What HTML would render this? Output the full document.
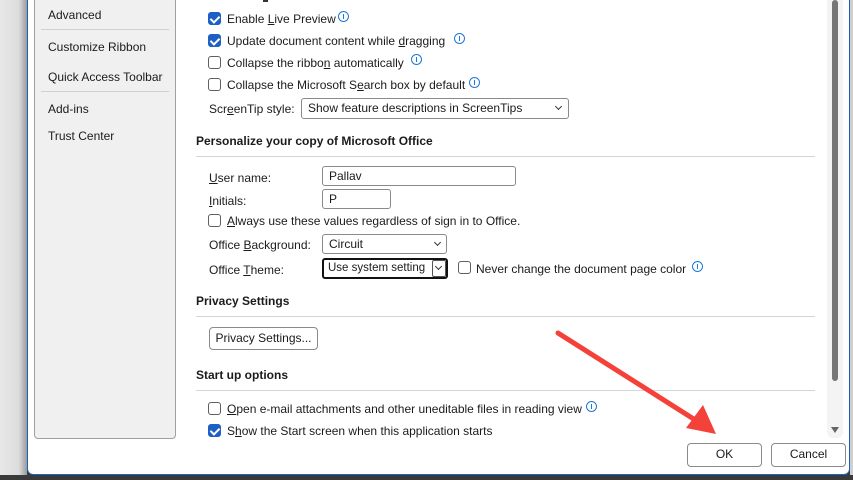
<!DOCTYPE html>
<html><head><style>
*{margin:0;padding:0;box-sizing:border-box}
body{width:853px;height:480px;overflow:hidden;position:relative;background:#3a3a3a;font-family:"Liberation Sans",sans-serif;font-size:12px;color:#1b1b1b}
.abs{position:absolute}
.t{position:absolute;white-space:nowrap;line-height:14px}
.cb{position:absolute;width:13px;height:13px;border:1px solid #5f5f5f;border-radius:3px;background:#fff}
.cb.on{background:#1d5fc4;border-color:#1d5fc4}
.cb.on:after{content:"";position:absolute;left:3px;top:1px;width:4px;height:7px;border:solid #fff;border-width:0 2px 2px 0;transform:rotate(45deg)}
.info{position:absolute;width:11px;height:11px;border:1.3px solid #1e78d8;border-radius:50%}
.info:after{content:"";position:absolute;left:3.5px;top:2px;width:1.5px;height:5px;background:#1e78d8}
.box{position:absolute;border:1px solid #8a8a8a;border-radius:3px;background:#fff;padding-left:6px;line-height:18px}
.chev{position:absolute;width:5px;height:5px;border:solid #333;border-width:0 1.3px 1.3px 0;transform:rotate(45deg)}
.h{position:absolute;font-weight:bold;white-space:nowrap}
.line{position:absolute;height:1px;background:#d5d5d5}
.btn{position:absolute;border:1px solid #8a8a8a;border-radius:4px;background:#fff;text-align:center;line-height:21px}
u{text-decoration:underline}
</style></head><body>
<div class="abs" style="left:0;top:0;width:27px;height:475px;background:linear-gradient(to right,#e8e8e8,#dcdcdc 70%,#9a9a9a)"></div>
<div class="abs" style="left:27px;top:-5px;width:823px;height:480px;background:#fff;border:1px solid #1f5fbf;border-radius:6px"></div>
<div class="abs" style="left:850px;top:0;width:3px;height:475px;background:#cfcfcf"></div>
<div class="abs" style="left:0;top:475px;width:853px;height:5px;background:#3a3a3a"></div>
<div class="abs" style="left:263px;top:0;width:5px;height:2px;background:#333"></div>
<!-- nav -->
<div class="abs" style="left:34px;top:-5px;width:142px;height:444px;background:#f0f0f0;border:1px solid #a0a0a0;border-radius:4px"></div>
<div class="t" style="left:48px;top:8px">Advanced</div>
<div class="line" style="left:41px;top:29px;width:128px;background:#d0d0d0"></div>
<div class="t" style="left:48px;top:40px">Customize Ribbon</div>
<div class="t" style="left:48px;top:70px">Quick Access Toolbar</div>
<div class="line" style="left:41px;top:91px;width:128px;background:#d0d0d0"></div>
<div class="t" style="left:48px;top:102px">Add-ins</div>
<div class="t" style="left:48px;top:129px">Trust Center</div>
<!-- scrollbar -->
<div class="abs" style="left:827px;top:0;width:16px;height:438px;background:#f4f4f4;border-radius:0 0 6px 6px"></div>
<div class="abs" style="left:832px;top:0;width:6px;height:381px;background:#777;border-radius:3px"></div>
<div class="abs" style="left:831px;top:427px;width:0;height:0;border-left:4px solid transparent;border-right:4px solid transparent;border-top:6px solid #666"></div>
<!-- options -->
<div class="cb on" style="left:208px;top:12px"></div><div class="t" style="left:227px;top:12px">Enable <u>L</u>ive Preview</div><div class="info" style="left:338px;top:11px"></div>
<div class="cb on" style="left:208px;top:34px"></div><div class="t" style="left:227px;top:34px">Update document content while <u>d</u>ragging</div><div class="info" style="left:454px;top:33px"></div>
<div class="cb" style="left:208px;top:56px"></div><div class="t" style="left:227px;top:56px">Collapse the ribbo<u>n</u> automatically</div><div class="info" style="left:411px;top:54px"></div>
<div class="cb" style="left:208px;top:78px"></div><div class="t" style="left:227px;top:78px">Collapse the Microsoft S<u>e</u>arch box by default</div><div class="info" style="left:469px;top:77px"></div>
<div class="t" style="left:209px;top:102px">Scr<u>e</u>enTip style:</div>
<div class="box" style="left:301px;top:98px;width:268px;height:21px">Show feature descriptions in ScreenTips</div><div class="chev" style="left:556px;top:104px"></div>
<div class="h" style="left:196px;top:134px">Personalize your copy of Microsoft Office</div>
<div class="line" style="left:196px;top:156px;width:619px"></div>
<div class="t" style="left:209px;top:171px"><u>U</u>ser name:</div>
<div class="box" style="left:322px;top:166px;width:194px;height:20px">Pallav</div>
<div class="t" style="left:209px;top:194px"><u>I</u>nitials:</div>
<div class="box" style="left:322px;top:189px;width:69px;height:20px">P</div>
<div class="cb" style="left:208px;top:214px"></div><div class="t" style="left:227px;top:214px"><u>A</u>lways use these values regardless of sign in to Office.</div>
<div class="t" style="left:209px;top:238px">Office <u>B</u>ackground:</div>
<div class="box" style="left:322px;top:234px;width:125px;height:20px">Circuit</div><div class="chev" style="left:435px;top:240px"></div>
<div class="t" style="left:209px;top:263px">Office <u>T</u>heme:</div>
<div class="box" style="left:322px;top:258px;width:126px;height:21px;border:2px solid #111;line-height:17px;padding-left:4px;font-size:11.5px">Use system setting</div>
<div class="abs" style="left:432px;top:260px;width:14px;height:17px;border:1px solid #555;border-radius:2px;background:#fff"></div><div class="chev" style="left:436px;top:264px"></div>
<div class="cb" style="left:458px;top:261px"></div><div class="t" style="left:476px;top:262px">Never change the document page color</div><div class="info" style="left:692px;top:261px"></div>
<div class="h" style="left:196px;top:294px">Privacy Settings</div>
<div class="line" style="left:196px;top:316px;width:619px"></div>
<div class="btn" style="left:209px;top:327px;width:109px;height:23px">Privacy Settings...</div>
<div class="h" style="left:196px;top:368px">Start up options</div>
<div class="line" style="left:196px;top:390px;width:619px"></div>
<div class="cb" style="left:208px;top:402px"></div><div class="t" style="left:227px;top:402px"><u>O</u>pen e-mail attachments and other uneditable files in reading view</div><div class="info" style="left:586px;top:401px"></div>
<div class="cb on" style="left:208px;top:424px"></div><div class="t" style="left:227px;top:424px">S<u>h</u>ow the Start screen when this application starts</div>
<div class="btn" style="left:687px;top:443px;width:75px;height:24px">OK</div>
<div class="btn" style="left:771px;top:443px;width:75px;height:24px">Cancel</div>
<svg class="abs" style="left:0;top:0" width="853" height="480">
<line x1="558" y1="333" x2="700" y2="423" stroke="#f4413a" stroke-width="5" stroke-linecap="round"/>
<polygon points="716,434 686,428 703,405" fill="#f4413a"/>
</svg>
</body></html>
